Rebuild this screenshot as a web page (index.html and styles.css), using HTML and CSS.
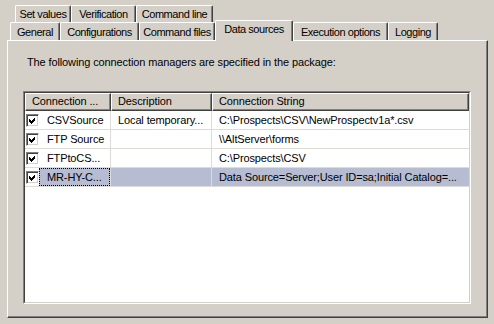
FILE: index.html
```html
<!DOCTYPE html>
<html>
<head>
<meta charset="utf-8">
<link rel="stylesheet" href="styles.css">
</head>
<body>
<div class="tabs">
  <div class="tabrow back">
    <div class="tab w-set">Set values</div>
    <div class="tab w-ver">Verification</div>
    <div class="tab w-cmd">Command line</div>
  </div>
  <div class="tabrow front">
    <div class="tab w-gen">General</div>
    <div class="tab w-conf">Configurations</div>
    <div class="tab w-cf">Command files</div>
    <div class="tab w-ds active">Data sources</div>
    <div class="tab w-exe">Execution options</div>
    <div class="tab w-log">Logging</div>
  </div>
</div>
<div class="panel">
  <div class="intro">The following connection managers are specified in the package:</div>
  <div class="list">
    <div class="list-inner">
      <div class="header">
        <div class="hcell c1">Connection ...</div>
        <div class="hcell c2">Description</div>
        <div class="hcell c3">Connection String</div>
      </div>
      <div class="row">
        <div class="cell c1"><span class="check"><svg width="11" height="11" viewBox="0 0 11 11"><polygon points="2,4 4,6 8,2 8,5 4,9 2,7" fill="#000"/></svg></span><span class="label">CSVSource</span></div>
        <div class="cell c2 txt">Local temporary...</div>
        <div class="cell c3 txt">C:\Prospects\CSV\NewProspectv1a*.csv</div>
      </div>
      <div class="row">
        <div class="cell c1"><span class="check"><svg width="11" height="11" viewBox="0 0 11 11"><polygon points="2,4 4,6 8,2 8,5 4,9 2,7" fill="#000"/></svg></span><span class="label">FTP Source</span></div>
        <div class="cell c2 txt"></div>
        <div class="cell c3 txt">\\AltServer\forms</div>
      </div>
      <div class="row">
        <div class="cell c1"><span class="check"><svg width="11" height="11" viewBox="0 0 11 11"><polygon points="2,4 4,6 8,2 8,5 4,9 2,7" fill="#000"/></svg></span><span class="label">FTPtoCS...</span></div>
        <div class="cell c2 txt"></div>
        <div class="cell c3 txt">C:\Prospects\CSV</div>
      </div>
      <div class="row selected">
        <div class="cell c1"><span class="check"><svg width="11" height="11" viewBox="0 0 11 11"><polygon points="2,4 4,6 8,2 8,5 4,9 2,7" fill="#000"/></svg></span><span class="label focus">MR-HY-C...</span></div>
        <div class="cell c2 txt"></div>
        <div class="cell c3 txt">Data Source=Server;User ID=sa;Initial Catalog=...</div>
      </div>
    </div>
  </div>
</div>
</body>
</html>
```
FILE: styles.css
```css
html, body {
  margin: 0;
  padding: 0;
  background: #d4d0c8;
}
body {
  font-family: "Liberation Sans", Arial, sans-serif;
  font-size: 11px;
  letter-spacing: -0.12px;
  color: #000;
  width: 494px;
  height: 324px;
  overflow: hidden;
}
.tabs {
  padding-top: 5px;
}
.tabrow {
  display: flex;
}
.tabrow.back {
  height: 17px;
  padding-left: 15px;
}
.tabrow.front {
  height: 18px;
  padding-left: 10px;
}
.tab {
  box-sizing: border-box;
  background: #d4d0c8;
  border-top: 1px solid #fff;
  border-left: 1px solid #fff;
  border-right: 1px solid #404040;
  box-shadow: inset -1px 0 0 #808080;
  border-radius: 2px 2px 0 0;
  text-align: center;
  letter-spacing: -0.45px;
  white-space: nowrap;
}
.tabrow.back .tab {
  height: 17px;
  line-height: 17px;
}
.tabrow.front .tab {
  height: 18px;
  line-height: 19px;
}
.tabrow.front .tab.active {
  height: 21px;
  margin-top: -2px;
  margin-bottom: -1px;
  line-height: 17px;
  position: relative;
  z-index: 2;
}
.w-set { width: 56px; }
.w-ver { width: 65px; }
.w-cmd { width: 77px; }
.w-gen { width: 50px; }
.w-conf { width: 79px; }
.w-cf { width: 76px; }
.w-ds { width: 78px; }
.w-exe { width: 95px; }
.w-log { width: 50px; }

.panel {
  box-sizing: border-box;
  margin-left: 7px;
  width: 481px;
  height: 278px;
  border-top: 1px solid #fff;
  border-left: 1px solid #fff;
  border-right: 1px solid #404040;
  border-bottom: 1px solid #404040;
  box-shadow: inset -1px -1px 0 #808080;
  padding-top: 15px;
  padding-left: 15px;
  position: relative;
  z-index: 1;
}
.intro {
  margin-left: 4px;
  line-height: 13px;
  white-space: nowrap;
}
.list {
  margin-top: 22px;
  box-sizing: border-box;
  width: 448px;
  height: 213px;
  border-top: 1px solid #808080;
  border-left: 1px solid #808080;
  border-right: 1px solid #fff;
  border-bottom: 1px solid #fff;
}
.list-inner {
  box-sizing: border-box;
  height: 100%;
  background: #fff;
  border-top: 1px solid #404040;
  border-left: 1px solid #404040;
  border-right: 1px solid #d4d0c8;
  border-bottom: 1px solid #d4d0c8;
}
.header {
  display: flex;
  height: 18px;
}
.hcell {
  box-sizing: border-box;
  background: #d4d0c8;
  border-top: 1px solid #fff;
  border-left: 1px solid #fff;
  border-right: 1px solid #404040;
  border-bottom: 1px solid #404040;
  box-shadow: inset -1px -1px 0 #808080;
  padding-left: 6px;
  line-height: 15px;
  white-space: nowrap;
}
.c1 { width: 86px; flex: none; }
.c2 { width: 101px; flex: none; }
.c3 { flex: 1; }
.row {
  display: flex;
  height: 19px;
  box-sizing: border-box;
  border-bottom: 1px solid #dedbd6;
}
.cell {
  box-sizing: border-box;
  border-right: 1px solid #dedbd6;
  white-space: nowrap;
  overflow: hidden;
  line-height: 18px;
}
.cell.c3 { border-right: none; }
.cell.txt {
  padding-left: 7px;
}
.cell.c1 {
  display: flex;
  align-items: center;
}
.row.selected .c2,
.row.selected .c3,
.row.selected .label {
  background: #b6bdd2;
}
.check {
  box-sizing: border-box;
  flex: none;
  width: 13px;
  height: 13px;
  margin-left: 1px;
  background: #fff;
  border-top: 1px solid #808080;
  border-left: 1px solid #808080;
  border-right: 1px solid #fff;
  border-bottom: 1px solid #fff;
  box-shadow: inset 1px 1px 0 #404040, inset -1px -1px 0 #d4d0c8;
  display: flex;
  align-items: center;
  justify-content: center;
}
.check svg {
  display: block;
  shape-rendering: crispEdges;
}
.label {
  flex: 1;
  box-sizing: border-box;
  height: 100%;
  padding-left: 8px;
  line-height: 18px;
}
.label.focus {
  border: 1px dotted #000;
  padding-left: 7px;
  line-height: 16px;
}
```
